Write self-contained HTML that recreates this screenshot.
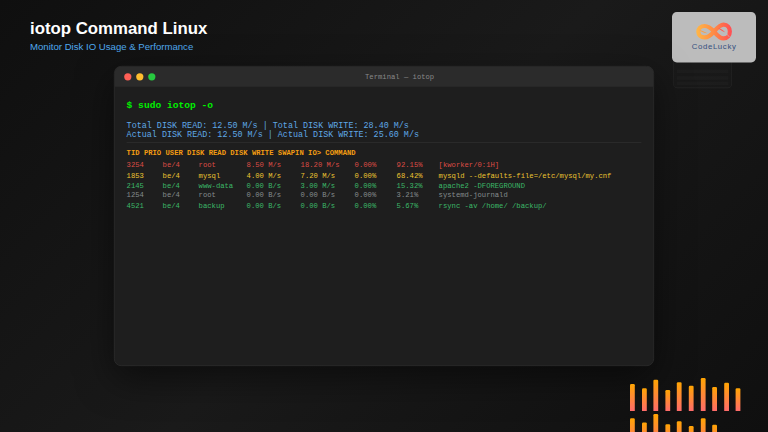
<!DOCTYPE html>
<html lang="en">
<head>
<meta charset="utf-8">
<title>iotop Command Linux</title>
<style>
*{box-sizing:border-box;margin:0;padding:0}
html,body{width:768px;height:432px;overflow:hidden;background:#111}
#stage{position:absolute;left:0;top:0;width:1280px;height:720px;transform:scale(.6);transform-origin:0 0;
 background:linear-gradient(135deg,#0f0f0f 0%,#1a1a1a 50%,#0f0f0f 100%);overflow:hidden;
 font-family:"Liberation Sans",sans-serif}
h1{position:absolute;left:50px;top:28.7px;font-size:28px;font-weight:700;color:#fff;line-height:36px;white-space:nowrap}
h2{position:absolute;left:50px;top:69px;font-size:16px;font-weight:400;color:#4fa9ee;line-height:20px;white-space:nowrap}
#logo{position:absolute;left:1120px;top:20px;width:140px;height:84px;border-radius:8px;background:#bcbcbc}
#logo svg{position:absolute;left:0;top:0}
#ghost{position:absolute;left:1122px;top:96px;width:97.5px;height:50.5px;border:1px solid rgba(255,255,255,.055);border-radius:0 0 7px 7px;background:rgba(255,255,255,.012)}
#ghost b{position:absolute;left:5px;right:5px;height:6px;background:rgba(255,255,255,.02)}
#win{position:absolute;left:190px;top:110px;width:900px;height:500px;border-radius:12px;background:#1e1e1e;border:1px solid #333;overflow:hidden;box-shadow:0 20px 60px rgba(0,0,0,.5)}
#bar{height:34px;background:#2b2b2b;border-bottom:1px solid #262626;position:relative}
.dot{position:absolute;top:11px;margin-left:-.5px;width:12px;height:12px;border-radius:50%}
#ttl{position:absolute;left:52px;right:0;top:0;text-align:center;color:#888;font:12px/35px "Liberation Mono",monospace}
.t{position:absolute;left:211px;font-family:"Liberation Mono",monospace;white-space:pre}
.cmd{font-size:16px;font-weight:700;color:#00f000;line-height:20px}
.sum{font-size:14px;color:#5fa8e6;line-height:16px}
.hr{position:absolute;left:211px;width:858px;height:1px;background:#333;top:237px}
.hdr{font-size:12px;font-weight:700;color:#f39c12;line-height:16.8px}
.row{width:858px;display:grid;grid-template-columns:60px 60px 80px 90px 90px 70px 70px 1fr;font-size:12px;line-height:16.8px}
.r{color:#dc4c45}.y{color:#ecc431}.g{color:#3cb868}.gr{color:#858c8d}.g2{color:#3cb868}
#bars{position:absolute;left:1050px;top:630px;width:196px;display:flex;flex-wrap:wrap;align-items:flex-end;column-gap:11.6px;row-gap:5px}
#bars i{display:block;width:8px;border-radius:2px 2px 0 0;background:linear-gradient(180deg,#ffa502,#ff6b6b)}
</style>
</head>
<body>
<div id="stage">
<h1>iotop Command Linux</h1>
<h2>Monitor Disk IO Usage &amp; Performance</h2>
<div id="ghost"><b style="top:19px"></b><b style="top:30px"></b><b style="top:39px"></b></div>
<div id="logo"><svg width="140" height="84" viewBox="0 0 140 84">
<defs><linearGradient id="lg" gradientUnits="userSpaceOnUse" x1="40" y1="0" x2="100" y2="0"><stop offset="0" stop-color="#ffb847"/><stop offset=".5" stop-color="#ff8a45"/><stop offset="1" stop-color="#ff4d55"/></linearGradient></defs>
<path d="M70,32.6 C64,26 59,23.3 54.5,23.3 C47.5,23.3 43.9,27.8 43.9,32.8 C43.9,38 47.8,42.3 54.5,42.3 C60.5,42.3 65,38.5 70,32.6 C75,26.5 80,20.9 86,20.9 C92.3,20.9 96.4,26 96.4,32.4 C96.4,39 92.3,44 86,44 C79.5,44 75,38.8 70,32.6 Z" fill="none" stroke="url(#lg)" stroke-width="7" stroke-linejoin="round"/>
<path d="M45,29.6 C50,31 54,33 59,35.4 C54,35 49,33.4 45,29.6 Z" fill="#ff9d40"/>
<path d="M77,26.6 C81,27.6 85,30 88.5,33.6 C84,32.4 80,30 77,26.6 Z" fill="#ff5a50"/>
<path d="M88.2,33.2 L95.6,41.6" stroke="#bcbcbc" stroke-width="1.2" fill="none"/>
<text x="32.8" y="61.3" textLength="73.6" lengthAdjust="spacing" font-family="Liberation Sans,sans-serif" font-size="13" fill="#35507f">CodeLucky</text></svg></div>
<div id="win">
 <div id="bar"><span class="dot" style="left:16px;background:#ff5f56"></span><span class="dot" style="left:36px;background:#ffbd2e"></span><span class="dot" style="left:56px;background:#27c93f"></span><div id="ttl">Terminal — iotop</div></div>
</div>
<div class="t cmd" style="top:166px">$ sudo iotop -o</div>
<div class="t sum" style="top:201px">Total DISK READ: 12.50 M/s | Total DISK WRITE: 28.40 M/s</div>
<div class="t sum" style="top:217px">Actual DISK READ: 12.50 M/s | Actual DISK WRITE: 25.60 M/s</div>
<div class="hr"></div>
<div class="t hdr" style="top:246.7px">TID PRIO USER DISK READ DISK WRITE SWAPIN IO&gt; COMMAND</div>
<div class="t row r" style="top:268px"><span>3254</span><span>be/4</span><span>root</span><span>8.50 M/s</span><span>18.20 M/s</span><span>0.00%</span><span>92.15%</span><span>[kworker/0:1H]</span></div>
<div class="t row y" style="top:284.8px"><span>1853</span><span>be/4</span><span>mysql</span><span>4.00 M/s</span><span>7.20 M/s</span><span>0.00%</span><span>68.42%</span><span>mysqld --defaults-file=/etc/mysql/my.cnf</span></div>
<div class="t row g" style="top:301.6px"><span>2145</span><span>be/4</span><span>www-data</span><span>0.00 B/s</span><span>3.00 M/s</span><span>0.00%</span><span>15.32%</span><span>apache2 -DFOREGROUND</span></div>
<div class="t row gr" style="top:318.4px"><span>1254</span><span>be/4</span><span>root</span><span>0.00 B/s</span><span>0.00 B/s</span><span>0.00%</span><span>3.21%</span><span>systemd-journald</span></div>
<div class="t row g2" style="top:335.2px"><span>4521</span><span>be/4</span><span>backup</span><span>0.00 B/s</span><span>0.00 B/s</span><span>0.00%</span><span>5.67%</span><span>rsync -av /home/ /backup/</span></div>
<div id="bars">
<i style="height:45px"></i><i style="height:38px"></i><i style="height:52px"></i><i style="height:35px"></i><i style="height:48px"></i><i style="height:42px"></i><i style="height:55px"></i><i style="height:40px"></i><i style="height:47px"></i><i style="height:38px"></i>
<i style="height:45px"></i><i style="height:38px"></i><i style="height:52px"></i><i style="height:35px"></i><i style="height:40px"></i><i style="height:32px"></i><i style="height:45px"></i><i style="height:34px"></i>
</div>
</div>
</body>
</html>
